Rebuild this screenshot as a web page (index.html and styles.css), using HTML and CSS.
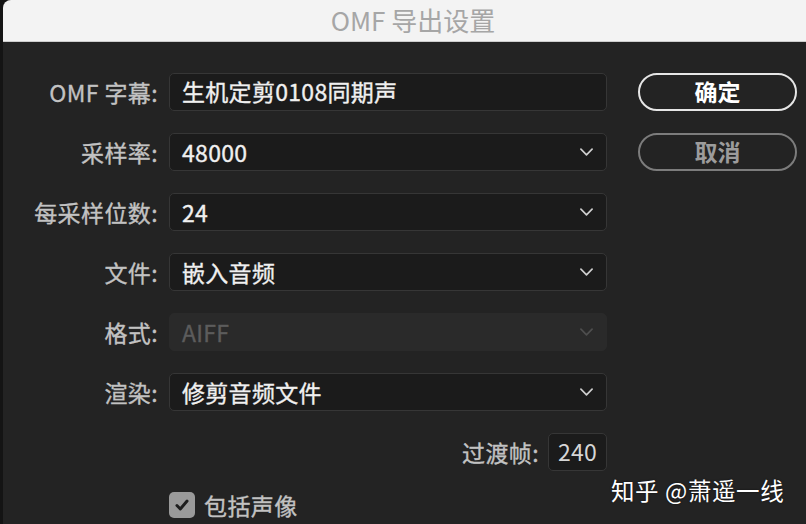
FILE: index.html
```html
<!DOCTYPE html>
<html lang="zh-CN">
<head>
<meta charset="utf-8">
<title>OMF 导出设置</title>
<link rel="stylesheet" href="styles.css">
</head>
<body>
<div class="window">
  <div class="titlebar">OMF 导出设置</div>
  <div class="content">
    <div class="form">
      <label class="label">OMF 字幕:</label>
      <div class="field text">生机定剪0108同期声</div>

      <label class="label">采样率:</label>
      <div class="field select"><span>48000</span><svg class="chev" viewBox="0 0 14 8"><path d="M1 1 L7 7 L13 1"/></svg></div>

      <label class="label">每采样位数:</label>
      <div class="field select"><span>24</span><svg class="chev" viewBox="0 0 14 8"><path d="M1 1 L7 7 L13 1"/></svg></div>

      <label class="label">文件:</label>
      <div class="field select"><span>嵌入音频</span><svg class="chev" viewBox="0 0 14 8"><path d="M1 1 L7 7 L13 1"/></svg></div>

      <label class="label">格式:</label>
      <div class="field select disabled"><span>AIFF</span><svg class="chev" viewBox="0 0 14 8"><path d="M1 1 L7 7 L13 1"/></svg></div>

      <label class="label">渲染:</label>
      <div class="field select"><span>修剪音频文件</span><svg class="chev" viewBox="0 0 14 8"><path d="M1 1 L7 7 L13 1"/></svg></div>

      <div class="spacer"></div>
      <div class="transition">
        <span class="label">过渡帧:</span>
        <div class="field small">240</div>
      </div>

      <div class="spacer"></div>
      <div class="check-row">
        <span class="checkbox"><svg viewBox="0 0 16 16"><path d="M3.5 8.5 L6.5 11.5 L12.5 4.5"/></svg></span>
        <span class="check-label">包括声像</span>
      </div>
    </div>
    <div class="buttons">
      <button class="btn primary">确定</button>
      <button class="btn secondary">取消</button>
    </div>
  </div>
  <div class="watermark">知乎 @萧遥一线</div>
</div>
</body>
</html>
```

FILE: styles.css
```css
* { box-sizing: border-box; }
html, body {
  margin: 0;
  padding: 0;
  width: 806px;
  height: 524px;
  overflow: hidden;
  background: #141414;
  font-family: "Noto Sans CJK SC", "Noto Sans", sans-serif;
}
.window {
  position: relative;
  width: 806px;
  height: 524px;
  margin-left: 3px;
  background: #232323;
  border-top-left-radius: 8px;
  overflow: hidden;
}
.titlebar {
  height: 42px;
  background: #f3f3f3;
  border-bottom: 1px solid #cdcdcd;
  color: #a6a6a6;
  font-size: 26px;
  line-height: 39px;
  text-align: center;
  padding-left: 14px;
}
.content {
  display: flex;
  align-items: flex-start;
  padding-top: 31px;
}
.form {
  display: grid;
  grid-template-columns: 155px 438px;
  column-gap: 11px;
  row-gap: 22px;
  align-items: center;
}
.label {
  color: #c2c2c2;
  font-size: 23px;
  line-height: 34px;
  text-align: right;
  white-space: nowrap;
  letter-spacing: 0.4px;
  -webkit-text-stroke: 0.35px currentColor;
}
.field {
  height: 38px;
  border: 1px solid #363636;
  border-radius: 5px;
  background: #1b1b1b;
  color: #f0f0f0;
  font-size: 23px;
  line-height: 34px;
  padding: 0 12px;
  letter-spacing: 0.3px;
  white-space: nowrap;
  -webkit-text-stroke: 0.35px currentColor;
}
.select {
  display: flex;
  align-items: center;
  justify-content: space-between;
}
.chev {
  width: 13px;
  height: 8px;
  margin-right: 1px;
  fill: none;
  stroke: #cfcfcf;
  stroke-width: 1.8;
  stroke-linecap: round;
  stroke-linejoin: round;
}
.disabled {
  background: #2a2a2a;
  border-color: #2a2a2a;
  color: #5c5c5c;
}
.disabled .chev { stroke: #4e4e4e; }
.transition {
  display: flex;
  align-items: center;
  justify-content: flex-end;
  gap: 9px;
}
.field.small {
  width: 59px;
  padding: 0;
  text-align: center;
  color: #d6d6d6;
  -webkit-text-stroke: 0;
}
.check-row {
  display: flex;
  align-items: center;
  gap: 9px;
  height: 26px;
  margin-top: -1px;
}
.checkbox {
  width: 26px;
  height: 26px;
  border-radius: 5px;
  background: #9a9a9a;
  display: flex;
  align-items: center;
  justify-content: center;
}
.checkbox svg {
  width: 18px;
  height: 18px;
  fill: none;
  stroke: #1e1e1e;
  stroke-width: 2.6;
  stroke-linecap: round;
  stroke-linejoin: round;
}
.check-label {
  color: #c2c2c2;
  font-size: 23px;
  letter-spacing: 0.4px;
  -webkit-text-stroke: 0.35px currentColor;
}
.buttons {
  display: flex;
  flex-direction: column;
  gap: 22px;
  margin-left: 31px;
}
.btn {
  width: 159px;
  height: 38px;
  border-radius: 19px;
  background: transparent;
  font-family: inherit;
  font-size: 23px;
  line-height: 28px;
  padding: 0 0 2px;
}
.primary {
  border: 2.5px solid #e6e6e6;
  color: #ffffff;
  font-weight: 700;
}
.secondary {
  border: 2.5px solid #7c7c7c;
  color: #9c9c9c;
  font-weight: 700;
}
.watermark {
  position: absolute;
  left: 608px;
  top: 473px;
  color: #ffffff;
  font-size: 23.5px;
  letter-spacing: 0.6px;
  text-shadow: 0 0 2px rgba(0,0,0,0.6);
}
```
